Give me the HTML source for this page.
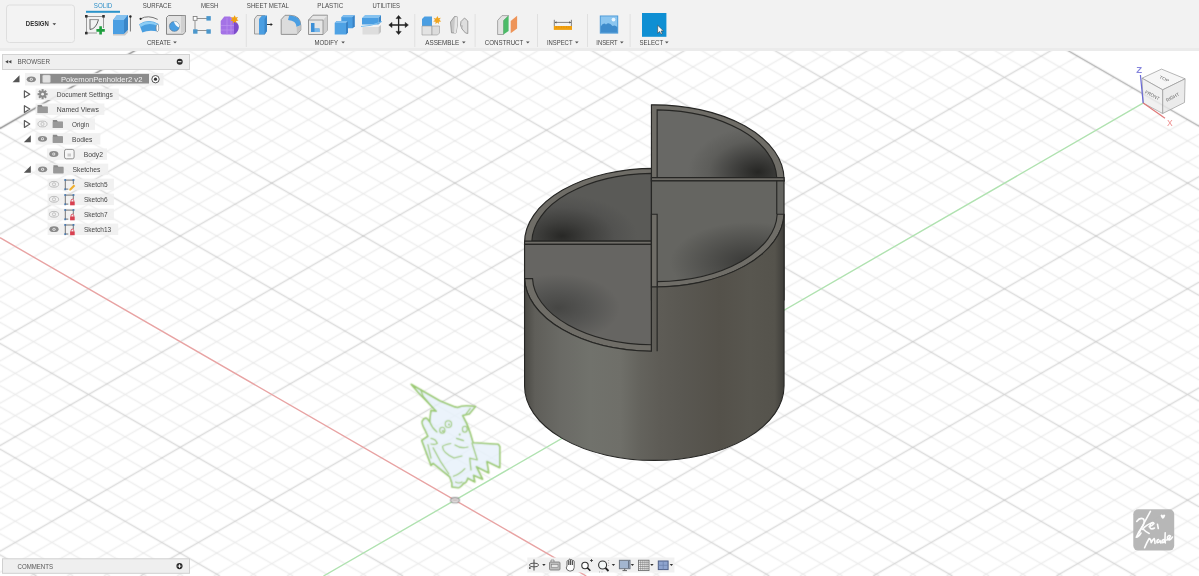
<!DOCTYPE html>
<html><head><meta charset="utf-8"><style>
html,body{margin:0;padding:0;width:1199px;height:576px;overflow:hidden;background:#fff;}
svg{display:block;}
#w{width:1199px;height:576px;}
</style></head><body><div id="w">
<svg width="1199" height="576" viewBox="0 0 1199 576">
<defs><filter id="bl" x="0" y="0" width="1199" height="576" filterUnits="userSpaceOnUse"><feConvolveMatrix order="3" kernelMatrix="1 2 1 2 8 2 1 2 1" divisor="20" edgeMode="duplicate" preserveAlpha="false"/></filter></defs>
<g filter="url(#bl)">
<rect width="1199" height="576" fill="#ffffff"/>
<path d="M0.0 576.0L0.1 576.0M0.0 533.7L73.3 576.0M0.0 512.5L110.0 576.0M0.0 491.4L146.6 576.0M0.0 470.3L183.2 576.0M0.0 428.0L256.5 576.0M0.0 406.8L293.2 576.0M0.0 385.7L329.8 576.0M0.0 364.6L366.4 576.0M0.0 322.3L439.7 576.0M0.0 301.1L476.4 576.0M0.0 280.0L513.0 576.0M0.0 258.9L549.6 576.0M0.0 216.6L622.9 576.0M0.0 195.4L659.5 576.0M0.0 174.3L696.2 576.0M0.0 153.2L732.8 576.0M15.2 119.7L806.1 576.0M33.6 109.1L842.7 576.0M51.9 98.5L879.4 576.0M70.2 88.0L916.0 576.0M106.8 66.8L989.3 576.0M125.2 56.3L1025.9 576.0M143.5 45.7L1062.6 576.0M161.8 35.1L1099.2 576.0M198.4 14.0L1172.5 576.0M216.8 3.4L1199.0 570.2M247.5 0.0L1199.0 549.0M284.1 0.0L1199.0 527.9M357.4 0.0L1199.0 485.6M394.0 0.0L1199.0 464.5M430.7 0.0L1199.0 443.3M467.3 0.0L1199.0 422.2M540.6 0.0L1199.0 379.9M577.2 0.0L1199.0 358.8M613.9 0.0L1199.0 337.6M650.5 0.0L1199.0 316.5M723.8 0.0L1199.0 274.2M760.4 0.0L1199.0 253.1M797.0 0.0L1199.0 231.9M833.7 0.0L1199.0 210.8M907.0 0.0L1199.0 168.5M943.6 0.0L1199.0 147.4M0.0 149.6L259.3 0.0M0.0 170.8L295.9 0.0M0.0 191.9L332.6 0.0M0.0 213.0L369.2 0.0M0.0 255.3L442.5 0.0M0.0 276.5L479.1 0.0M0.0 297.6L515.8 0.0M0.0 318.7L552.4 0.0M0.0 361.0L625.7 0.0M0.0 382.2L662.3 0.0M0.0 403.3L699.0 0.0M0.0 424.4L735.6 0.0M0.0 466.7L808.9 0.0M0.0 487.9L845.5 0.0M0.0 509.0L882.1 0.0M0.0 530.1L918.8 0.0M0.0 572.4L986.1 3.4M30.4 576.0L1004.5 14.0M67.1 576.0L1022.8 24.5M103.7 576.0L1041.1 35.1M177.0 576.0L1077.7 56.3M213.6 576.0L1096.1 66.8M250.3 576.0L1114.4 77.4M286.9 576.0L1132.7 88.0M360.2 576.0L1169.3 109.1M396.8 576.0L1187.7 119.7M433.4 576.0L1199.0 134.3M470.1 576.0L1199.0 155.4M543.4 576.0L1199.0 197.7M580.0 576.0L1199.0 218.8M616.6 576.0L1199.0 240.0M653.3 576.0L1199.0 261.1M726.5 576.0L1199.0 303.4M763.2 576.0L1199.0 324.5M799.8 576.0L1199.0 345.7M836.5 576.0L1199.0 366.8M909.7 576.0L1199.0 409.1M946.4 576.0L1199.0 430.2M983.0 576.0L1199.0 451.4M1019.6 576.0L1199.0 472.5M1092.9 576.0L1199.0 514.8M1129.6 576.0L1199.0 535.9M1166.2 576.0L1199.0 557.1" stroke="#e4e4e4" stroke-width="1" fill="none"/>
<path d="M0.0 554.8L36.7 576.0M0.0 449.1L219.9 576.0M0.0 343.4L403.1 576.0M0.0 132.0L769.5 576.0M88.5 77.4L952.6 576.0M180.1 24.5L1135.8 576.0M320.8 0.0L1199.0 506.8M503.9 0.0L1199.0 401.1M687.1 0.0L1199.0 295.4M870.3 0.0L1199.0 189.7M0.0 234.2L405.9 0.0M0.0 339.9L589.0 0.0M0.0 445.6L772.2 0.0M0.0 551.3L955.4 0.0M140.3 576.0L1059.4 45.7M506.7 576.0L1199.0 176.6M689.9 576.0L1199.0 282.2M873.1 576.0L1199.0 387.9M1056.3 576.0L1199.0 493.6" stroke="#c0c0c0" stroke-width="1" fill="none"/>
<path d="M0.0 128.5L222.7 0.0" stroke="#525252" stroke-width="1.15" fill="none"/><path d="M980.2 0.0L1199.0 126.2" stroke="#6e6e6e" stroke-width="1" fill="none"/>
</g>
<path d="M0.0 237.7L586.3 576.0" stroke="#e8a3a3" stroke-width="1.4" fill="none"/>
<path d="M323.5 576.0L1143.0 103.2" stroke="#b0e2b0" stroke-width="1.4" fill="none"/>
<g filter="url(#bl)"><path d="M411.1 384.3L439.7 400.8Q447 404 455 406.9L457.5 407.5Q463 404.5 475.5 406.5L469.3 414L462.6 415.5Q467.4 423.6 470.3 433.2L473.1 442.8L498.3 444.3L499.8 446.5L499.8 467.7L486.9 461.5L488.8 473L476.4 466.7L482.6 479.2L473.5 475.3L474.9 482L467.8 478.2Q466 484 463.9 483Q460 488 458.2 487.8L451.9 487L451.9 483.1L449.8 476.9L433.1 463.3L431 465.4L421.7 440.4L427.9 436.25L425 430Q421 423 422.4 420.8Q424 417.5 426.7 418.2L429.7 421.7L430.2 416.5L431 410.4L436.25 411.25L418 392.2Z" fill="#e6f0fa" fill-opacity="0.8" stroke="#98c86e" stroke-width="1.6" stroke-linejoin="round"/>
<path d="M420.6 389.5L423.2 396.5L433.6 408.6M470.3 408.4L466 414M429.7 421.7Q432 428 437 432M431 438.3Q436 439 437.3 443.5Q434 445 431 444M427.9 444.6L431 458.1M433.1 447.7Q440 462 448.75 473.75M450.8 443.5Q443 445 442.5 446.7Q443 453 454 458L462 456M456.5 438.4L463.6 440.6M455 445Q461 449 468 447M472 443L477.3 460L469.7 458.1L471 470M464.9 468.7Q460 474 453.4 476.3M455.5 482Q459 484 462 482" fill="none" stroke="#98c86e" stroke-width="1.2" stroke-linecap="round" stroke-linejoin="round"/>
<ellipse cx="442.3" cy="430.2" rx="2.6" ry="3" fill="none" stroke="#98c86e" stroke-width="1.1"/><ellipse cx="448.4" cy="424.1" rx="3.2" ry="3.4" fill="none" stroke="#98c86e" stroke-width="1.1"/><ellipse cx="464.8" cy="429.3" rx="2.4" ry="3" fill="none" stroke="#98c86e" stroke-width="1.1"/>
<circle cx="459.7" cy="434.5" r="0.9" fill="#98c86e"/><circle cx="442.8" cy="431" r="1" fill="#98c86e"/><circle cx="449" cy="424.5" r="1" fill="#98c86e"/>
<ellipse cx="455" cy="500.2" rx="4.3" ry="2.6" fill="#f4f0f0" stroke="#8a8a8a" stroke-width="1.1"/><path d="M452.5 500.2h5" stroke="#a09090" stroke-width="1"/></g>
<defs><linearGradient id="gOuter" x1="524.5" y1="0" x2="784" y2="0" gradientUnits="userSpaceOnUse">
<stop offset="0" stop-color="#4a4944"/><stop offset="0.04" stop-color="#5f5e59"/><stop offset="0.137" stop-color="#6a6a65"/>
<stop offset="0.252" stop-color="#71726c"/><stop offset="0.37" stop-color="#6f6f69"/><stop offset="0.445" stop-color="#64635d"/>
<stop offset="0.52" stop-color="#5e5c56"/><stop offset="0.6" stop-color="#5a5852"/><stop offset="0.753" stop-color="#54514a"/><stop offset="0.869" stop-color="#58564f"/>
<stop offset="0.965" stop-color="#55534c"/><stop offset="1" stop-color="#3f3e3a"/></linearGradient><radialGradient id="gBR" cx="758" cy="172" r="70" gradientUnits="userSpaceOnUse" gradientTransform="translate(758 172) scale(1 0.65) translate(-758 -172)">
<stop offset="0" stop-color="#262624"/><stop offset="0.3" stop-color="#3d3d3b"/><stop offset="0.7" stop-color="#5d5d5a"/><stop offset="1" stop-color="#686865"/></radialGradient><radialGradient id="gBL" cx="562" cy="236" r="75" gradientUnits="userSpaceOnUse" gradientTransform="translate(562 236) scale(1 0.55) translate(-562 -236)">
<stop offset="0" stop-color="#282826"/><stop offset="0.35" stop-color="#3f3f3d"/><stop offset="0.7" stop-color="#525250"/><stop offset="1" stop-color="#5a5a57"/></radialGradient><radialGradient id="gFL" cx="558" cy="308" r="62" gradientUnits="userSpaceOnUse" gradientTransform="translate(558 308) scale(1 0.55) translate(-558 -308)">
<stop offset="0" stop-color="#464644"/><stop offset="0.5" stop-color="#555553"/><stop offset="1" stop-color="#666562"/></radialGradient><radialGradient id="gFR" cx="750" cy="262" r="80" gradientUnits="userSpaceOnUse" gradientTransform="translate(750 262) scale(1 0.5) translate(-750 -262)">
<stop offset="0" stop-color="#393937"/><stop offset="0.5" stop-color="#4f4f4c"/><stop offset="1" stop-color="#656561"/></radialGradient></defs>
<path d="M524.55 244.35L524.55 242.70A129.75 74.40 0 0 1 654.30 168.30L654.30 244.35Z" fill="#6f6d67" stroke="#262624" stroke-width="1.15"/>
<path d="M531.88 241.05A122.45 69.40 0 0 1 651.45 173.32L651.45 241.05Z" fill="url(#gBL)" stroke="#262624" stroke-width="1.15"/>
<path d="M524.55 241.05L651.45 241.05L651.45 244.35L524.55 244.35Z" fill="#6f6d67" stroke="#262624" stroke-width="1.15"/>
<path d="M651.45 180.85L651.45 104.82A129.75 74.40 0 0 1 784.05 179.20L784.05 180.85Z" fill="#6f6d67" stroke="#262624" stroke-width="1.15"/>
<path d="M657.15 177.55L657.15 109.82A122.45 69.40 0 0 1 776.72 177.55Z" fill="url(#gBR)" stroke="#262624" stroke-width="1.15"/>
<path d="M651.45 177.55L784.05 177.55L784.05 180.85L651.45 180.85Z" fill="#6f6d67" stroke="#262624" stroke-width="1.15"/>
<path d="M524.55 244.35L651.45 244.35L651.45 360L524.55 360Z" fill="url(#gFL)" stroke="#262624" stroke-width="1.15"/>
<path d="M651.45 180.85L784.05 180.85L784.05 300L651.45 300Z" fill="url(#gFR)" stroke="#262624" stroke-width="1.15"/>
<path d="M776.75 180.85L776.75 214.25" stroke="#262624" stroke-width="1.15"/>
<path d="M784.05 214.25A129.75 74.40 0 0 1 657.15 286.98L657.15 281.58A122.85 69.00 0 0 0 777.15 214.25Z" fill="#6f6d67" stroke="#262624" stroke-width="1.15"/>
<path d="M651.45 214.25L657.15 214.25L657.15 286.98L651.45 286.98Z" fill="#6f6d67" stroke="#262624" stroke-width="1.15"/>
<path d="M651.45 351.28A129.75 74.40 0 0 1 524.55 278.55L532.55 278.55A121.75 67.90 0 0 0 651.45 344.78Z" fill="#6f6d67" stroke="#262624" stroke-width="1.15"/>
<path d="M524.55 278.55L524.55 386.00A129.75 74.40 0 0 0 784.05 386.00L784.05 214.25A129.75 74.40 0 0 1 651.45 286.98L651.45 351.28A129.75 74.40 0 0 1 524.55 278.55Z" fill="url(#gOuter)" stroke="#262624" stroke-width="1.1"/>
<path d="M657.15 286.98L657.15 351.28" stroke="#262624" stroke-width="1.15"/>
<g opacity="0.999"><rect x="0" y="0" width="1199" height="48.5" fill="#f2f2f2"/>
<rect x="0" y="48" width="1199" height="3" fill="#ebebeb"/>
<rect x="6.5" y="5" width="68" height="37.5" rx="3" fill="#f3f3f3" stroke="#dedede" stroke-width="1"/>
<text x="25.8" y="26.09" font-family="Liberation Sans, sans-serif" font-size="7.4" fill="#2e2e2e" font-weight="bold" text-anchor="start" textLength="23.0" lengthAdjust="spacingAndGlyphs" >DESIGN</text>
<path d="M52.5 23.2h3.6l-1.8 2.1z" fill="#3f3f3f"/>
<text x="93.8" y="7.82" font-family="Liberation Sans, sans-serif" font-size="7.3" fill="#2d8fc8" font-weight="normal" text-anchor="start" textLength="18.5" lengthAdjust="spacingAndGlyphs" >SOLID</text>
<text x="142.8" y="7.82" font-family="Liberation Sans, sans-serif" font-size="7.3" fill="#4a4a4a" font-weight="normal" text-anchor="start" textLength="28.7" lengthAdjust="spacingAndGlyphs" >SURFACE</text>
<text x="200.9" y="7.82" font-family="Liberation Sans, sans-serif" font-size="7.3" fill="#4a4a4a" font-weight="normal" text-anchor="start" textLength="17.4" lengthAdjust="spacingAndGlyphs" >MESH</text>
<text x="246.8" y="7.82" font-family="Liberation Sans, sans-serif" font-size="7.3" fill="#4a4a4a" font-weight="normal" text-anchor="start" textLength="42.1" lengthAdjust="spacingAndGlyphs" >SHEET METAL</text>
<text x="317.3" y="7.82" font-family="Liberation Sans, sans-serif" font-size="7.3" fill="#4a4a4a" font-weight="normal" text-anchor="start" textLength="25.9" lengthAdjust="spacingAndGlyphs" >PLASTIC</text>
<text x="372.6" y="7.82" font-family="Liberation Sans, sans-serif" font-size="7.3" fill="#4a4a4a" font-weight="normal" text-anchor="start" textLength="27.4" lengthAdjust="spacingAndGlyphs" >UTILITIES</text>
<rect x="86" y="10.8" width="34" height="2" fill="#2b93c9"/>
<rect x="245.8" y="14" width="1" height="33" fill="#e0e0e0"/>
<rect x="414.3" y="14" width="1" height="33" fill="#e0e0e0"/>
<rect x="474.6" y="14" width="1" height="33" fill="#e0e0e0"/>
<rect x="537.0" y="14" width="1" height="33" fill="#e0e0e0"/>
<rect x="587.0" y="14" width="1" height="33" fill="#e0e0e0"/>
<rect x="629.6" y="14" width="1" height="33" fill="#e0e0e0"/>
<text x="146.9" y="45.15" font-family="Liberation Sans, sans-serif" font-size="7.2" fill="#444444" font-weight="normal" text-anchor="start" textLength="24.0" lengthAdjust="spacingAndGlyphs" >CREATE</text>
<path d="M173.2 41.4h3.6l-1.8 2z" fill="#505050"/>
<text x="314.6" y="45.15" font-family="Liberation Sans, sans-serif" font-size="7.2" fill="#444444" font-weight="normal" text-anchor="start" textLength="23.4" lengthAdjust="spacingAndGlyphs" >MODIFY</text>
<path d="M341.3 41.4h3.6l-1.8 2z" fill="#505050"/>
<text x="425.2" y="45.15" font-family="Liberation Sans, sans-serif" font-size="7.2" fill="#444444" font-weight="normal" text-anchor="start" textLength="34.1" lengthAdjust="spacingAndGlyphs" >ASSEMBLE</text>
<path d="M462.0 41.4h3.6l-1.8 2z" fill="#505050"/>
<text x="484.8" y="45.15" font-family="Liberation Sans, sans-serif" font-size="7.2" fill="#444444" font-weight="normal" text-anchor="start" textLength="38.5" lengthAdjust="spacingAndGlyphs" >CONSTRUCT</text>
<path d="M526.0 41.4h3.6l-1.8 2z" fill="#505050"/>
<text x="546.9" y="45.15" font-family="Liberation Sans, sans-serif" font-size="7.2" fill="#444444" font-weight="normal" text-anchor="start" textLength="25.6" lengthAdjust="spacingAndGlyphs" >INSPECT</text>
<path d="M575.0 41.4h3.6l-1.8 2z" fill="#505050"/>
<text x="596.3" y="45.15" font-family="Liberation Sans, sans-serif" font-size="7.2" fill="#444444" font-weight="normal" text-anchor="start" textLength="21.3" lengthAdjust="spacingAndGlyphs" >INSERT</text>
<path d="M620.0 41.4h3.6l-1.8 2z" fill="#505050"/>
<text x="639.5" y="45.15" font-family="Liberation Sans, sans-serif" font-size="7.2" fill="#444444" font-weight="normal" text-anchor="start" textLength="23.7" lengthAdjust="spacingAndGlyphs" >SELECT</text>
<path d="M665.0 41.4h3.6l-1.8 2z" fill="#505050"/>
<g>
<path d="M86.5 16.5H103.5V28M86.5 16.5V33H97" stroke="#9a9a9a" stroke-width="1" fill="none"/>
<rect x="85" y="15" width="2.6" height="2.6" fill="#333"/><rect x="102.2" y="15" width="2.6" height="2.6" fill="#333"/><rect x="85" y="31.8" width="2.6" height="2.6" fill="#333"/>
<path d="M90 19.6V29.5Q96 29 98.5 19.6" stroke="#555" stroke-width="0.9" fill="none"/>
<path d="M89.5 19.6H98.5" stroke="#777" stroke-width="0.8"/>
<path d="M100.6 26.2v8.4M96.4 30.4h8.4" stroke="#1e9e3e" stroke-width="2.6"/>
</g>
<g>
<path d="M113 20L117 15H128V30L124 34H113Z" fill="#4a9ee2"/>
<path d="M113 20L117 15H128L124 20Z" fill="#86c2ef"/>
<path d="M124 20L128 15V30L124 34Z" fill="#3a86c8"/>
<path d="M113 34H124L128 30V32.5L125 35.5H113Z" fill="#c8c8c8"/>
<path d="M130.4 16V31.5" stroke="#777" stroke-width="1"/><circle cx="130.4" cy="16.5" r="1.2" fill="#222"/>
</g>
<g>
<path d="M140.6 18.8Q148 14.5 157.7 19.4" stroke="#555" stroke-width="0.8" fill="none"/><circle cx="140.6" cy="18.8" r="1.1" fill="#222"/>
<path d="M139.2 24.2Q148.6 17.8 158.6 24L158 31.5Q148.6 29.5 142.3 32.5Z" fill="#4a9fe0"/>
<path d="M139.6 24.3Q148.6 19 158.3 24.2L157.8 26Q148.6 21.5 140.5 27Z" fill="#8ccdf5"/>
<ellipse cx="157.4" cy="28" rx="1.3" ry="3.6" fill="#fff" stroke="#777" stroke-width="0.6"/>
</g>
<g>
<path d="M168.5 15.5H185.5V32L183 34.3H166.5V17.5Z" fill="#e2e2e2" stroke="#7a7a7a" stroke-width="0.9"/>
<path d="M181 16L185.2 15.8V32L181 33Z" fill="#d0d0d0"/>
<circle cx="174.4" cy="26.4" r="5" fill="#4a9ee2" stroke="#4a5a6a" stroke-width="0.7" stroke-dasharray="0.8 0.5"/>
<path d="M173.8 21.5A5 5 0 0 1 179.3 27.4Q175.5 26.5 173.8 21.5Z" fill="#f4f8fb"/>
</g>
<g>
<path d="M197 18.5H207M195 21V30.5H207" stroke="#888" stroke-width="0.9" fill="none"/>
<rect x="193.2" y="16.5" width="3.8" height="3.8" fill="#fff" stroke="#777" stroke-width="0.8"/>
<rect x="206.4" y="16.1" width="4.4" height="4.5" fill="#4b97cc"/><rect x="193.1" y="29.3" width="4.4" height="4.4" fill="#4b97cc"/><rect x="206.4" y="29.3" width="4.4" height="4.4" fill="#4b97cc"/>
</g>
<g>
<path d="M220.7 21L224.3 16.5H230L234 20V34.6H222.5Q220.7 34.6 220.7 32.8Z" fill="#a472e6"/>
<path d="M234 21Q238.8 23 238.8 27Q238.8 32 234 34.6Z" fill="#7d4bcb"/>
<path d="M221 25.5H234M221 30H234M227 18V34.5M231 18V34.5" stroke="#bf98f0" stroke-width="0.6"/>
<path d="M234.8 15.2l.9 2.3 2.4-.5-1.4 2 1.8 1.6-2.4.3.2 2.4-1.8-1.6-1.7 1.7.1-2.4-2.4-.3 1.8-1.6-1.4-2 2.4.5z" fill="#f0a010"/>
</g>
<g>
<path d="M254.5 19L257 15.5H265V34H254.5Z" fill="#e3e3e3" stroke="#8a8a8a" stroke-width="0.8"/>
<path d="M259 19L262 15.5H267V31L264.5 34.5H259Z" fill="#4a9ee2"/>
<path d="M264.5 19L267 15.5V31L264.5 34.5Z" fill="#3a86c8"/>
<path d="M267 24.5H272" stroke="#222" stroke-width="0.9"/><path d="M272.8 24.5l-2.2-1.6v3.2z" fill="#222"/>
</g>
<g>
<path d="M281.2 19.5L285 15.3H290Q300.8 15.5 300.8 25.5V30L297 34.4H281.2Z" fill="#dcdcdc" stroke="#8a8a8a" stroke-width="0.9"/>
<path d="M289.2 15.6Q300.5 15.8 300.6 25.3L296.6 27Q296.3 20.5 288 20Z" fill="#4a9ee2"/>
<path d="M296.6 27L300.6 25.3V30L297 34Z" fill="#c4c4c4"/>
</g>
<g>
<path d="M308.5 20L313 15.2H327.5V30L323 34.5H308.5Z" fill="#e6e6e6" stroke="#8a8a8a" stroke-width="0.9"/>
<path d="M323 20L327.5 15.2V30L323 34.5Z" fill="#cfcfcf"/><path d="M308.5 20H323V34.5" stroke="#8a8a8a" stroke-width="0.8" fill="none"/>
<path d="M311 23H314.5V28.5H319.5V32H311Z" fill="#3d8fd6"/><path d="M314.5 28.5H319.5V32H314.5Z" fill="#7ab8ea"/>
</g>
<g>
<path d="M341.3 17.2L343.3 15.2H354.6V26.3L352.6 28.3H341.3Z" fill="#4a9ee2"/>
<path d="M341.3 17.2L343.3 15.2H354.6L352.6 17.2Z" fill="#7fbdee"/><path d="M352.6 17.2L354.6 15.2V26.3L352.6 28.3Z" fill="#3a82c4"/>
<path d="M334.7 23L336.7 21H348V32.6L346 34.6H334.7Z" fill="#4fa2e4"/>
<path d="M334.7 23L336.7 21H348L346 23Z" fill="#7fbdee"/><path d="M346 23L348 21V32.6L346 34.6Z" fill="#3a82c4"/>
</g>
<g>
<path d="M362 18L365 15H381L378.5 18Z" fill="#86c2ef"/><path d="M362 18H378.5V24.5H362Z" fill="#4a9ee2"/><path d="M378.5 18L381 15V22L378.5 24.5Z" fill="#3a86c8"/>
<path d="M361 26.5Q371 26.5 382 21.5" stroke="#7cc0f0" stroke-width="1" fill="none"/>
<path d="M362.5 27H378.5V34.5H362.5Z" fill="#dddddd"/><path d="M378.5 27L381 25V32L378.5 34.5Z" fill="#c4c4c4"/>
</g>
<g stroke="#222" stroke-width="1.3" fill="#222">
<path d="M398.6 17.5V32.5M390.5 25H406.7" fill="none"/>
<path d="M398.6 15.4l-2.6 3.2h5.2z M398.6 34.6l-2.6-3.2h5.2z M388.8 25l3.2-2.6v5.2z M408.4 25l-3.2-2.6v5.2z" stroke-width="0.5"/>
</g>
<g>
<path d="M422 19L424.5 16.5H432V26H422Z" fill="#4a9ee2"/><path d="M422 26H432V35H422Z" fill="#e3e3e3" stroke="#999" stroke-width="0.6"/>
<path d="M432 26H439.5V33L437.5 35H432Z" fill="#dcdcdc" stroke="#999" stroke-width="0.6"/>
<path d="M437.5 16l.9 2.3 2.4-.5-1.4 2 1.8 1.6-2.4.3.2 2.4-1.8-1.6-1.7 1.7.1-2.4-2.4-.3 1.8-1.6-1.4-2 2.4.5z" fill="#f0a520"/>
</g>
<g stroke="#8a8a8a" stroke-width="0.8">
<path d="M450.5 22L454.5 16.5L457.5 17V24L456 33L451.5 32.8Z" fill="#c8c8c8"/><path d="M455 17.2L457.5 17V24L456 33L454 33Z" fill="#e6e6e6" stroke="none"/>
<path d="M460.5 25L461 21.5L464.5 18L467.8 21V33.5L465.5 33L462 29Z" fill="#dedede"/><path d="M460.5 25L462 29L463 25.5Z" fill="#b8b8b8" stroke="none"/>
</g>
<g>
<path d="M497.6 20.5L502 15.6H508.6L503.6 20.5V34.5H497.6Z" fill="#e3e3e3" stroke="#8a8a8a" stroke-width="0.7"/>
<path d="M503.4 20.5L508.6 15.4V31L503.4 34.5Z" fill="#4cbb68"/>
<path d="M510.7 21L517.1 15.8V28.5L510.7 33.3Z" fill="#ee9458"/>
</g>
<g>
<path d="M554.3 19.8V26M571.4 19.8V26" stroke="#666" stroke-width="0.8"/>
<path d="M555 22.4H570.7" stroke="#666" stroke-width="0.8"/><path d="M554.5 22.4l2 -1.2v2.4z M571.2 22.4l-2-1.2v2.4z" fill="#555"/>
<rect x="553.8" y="26" width="18.2" height="3.9" fill="#f0a010"/>
<path d="M556 27h.8M558.5 27h.8M561 27h.8M563.5 27h.8M566 27h.8M568.5 27h.8" stroke="#d08000" stroke-width="0.8"/>
</g>
<g>
<rect x="599.8" y="15.5" width="18.4" height="18.1" fill="#4a98d6"/>
<rect x="600.7" y="16.4" width="16.6" height="16.3" fill="#8cc6f0"/>
<path d="M600.7 32.7V26.5Q603.5 22 606 24.5Q609 21.5 612.5 26Q615 24.5 617.3 27V32.7Z" fill="#3f8ccc"/>
<circle cx="613.5" cy="19.6" r="1.9" fill="#e8f5ff"/>
</g>
<g>
<rect x="642" y="13" width="24.4" height="23.8" fill="#0f8fd3"/>
<path d="M657.7 25.3V33.3L659.6 31.4L661 34.2L662.3 33.6L661 30.9H663.5Z" fill="#fff" stroke="#333" stroke-width="0.5"/>
</g>
<rect x="2.5" y="54.5" width="187" height="15" fill="#efefef" stroke="#d3d3d3" stroke-width="1"/>
<path d="M5.2 61.7l3-1.8v3.6z M8.4 61.7l3-1.8v3.6z" fill="#444"/>
<text x="17.5" y="64.32" font-family="Liberation Sans, sans-serif" font-size="7.3" fill="#555555" font-weight="normal" text-anchor="start" textLength="32.5" lengthAdjust="spacingAndGlyphs" >BROWSER</text>
<circle cx="179.7" cy="61.7" r="3" fill="#2c2c2c"/><rect x="178" y="61.2" width="3.4" height="1" fill="#fff"/>
<path d="M19.5 75.3V82.3H12.5Z" fill="#555"/>
<rect x="25" y="73" width="138.5" height="12.5" fill="#efefef" fill-opacity="0.88"/>
<g><ellipse cx="31.3" cy="79.3" rx="4.6" ry="2.9" fill="#8a8a8a"/><circle cx="31.3" cy="79.3" r="1.5" fill="#f0f0f0"/><circle cx="31.3" cy="79.3" r="0.8" fill="#8a8a8a"/></g>
<rect x="40" y="73.9" width="109" height="9.6" fill="#8c8c8c"/>
<rect x="42.6" y="75" width="7.8" height="7.8" rx="1.2" fill="#e2e2e2" stroke="#bbb" stroke-width="0.5"/>
<text x="60.9" y="81.89" font-family="Liberation Sans, sans-serif" font-size="7.8" fill="#f2f2f2" font-weight="normal" text-anchor="start" textLength="81.5" lengthAdjust="spacingAndGlyphs" >PokemonPenholder2 v2</text>
<circle cx="155.5" cy="79.2" r="3.7" fill="#fff" stroke="#444" stroke-width="0.9"/><circle cx="155.5" cy="79.2" r="1.6" fill="#333"/>
<rect x="35.6" y="88.60000000000001" width="83.19999999999999" height="11.399999999999991" fill="#efefef" fill-opacity="0.88"/>
<path d="M24.400000000000002 90.8L29.8 94.2L24.400000000000002 97.60000000000001Z" fill="none" stroke="#5e5e5e" stroke-width="1.2" stroke-linejoin="round"/>
<g transform="translate(42.6 94.2)"><circle r="3.3" fill="#8a8a8a"/><rect x="-1.05" y="-5" width="2.1" height="2.4" fill="#8a8a8a" transform="rotate(0)"/><rect x="-1.05" y="-5" width="2.1" height="2.4" fill="#8a8a8a" transform="rotate(45)"/><rect x="-1.05" y="-5" width="2.1" height="2.4" fill="#8a8a8a" transform="rotate(90)"/><rect x="-1.05" y="-5" width="2.1" height="2.4" fill="#8a8a8a" transform="rotate(135)"/><rect x="-1.05" y="-5" width="2.1" height="2.4" fill="#8a8a8a" transform="rotate(180)"/><rect x="-1.05" y="-5" width="2.1" height="2.4" fill="#8a8a8a" transform="rotate(225)"/><rect x="-1.05" y="-5" width="2.1" height="2.4" fill="#8a8a8a" transform="rotate(270)"/><rect x="-1.05" y="-5" width="2.1" height="2.4" fill="#8a8a8a" transform="rotate(315)"/><circle r="1.4" fill="#f0f0f0"/></g>
<text x="56.7" y="97.06" font-family="Liberation Sans, sans-serif" font-size="7.9" fill="#464646" font-weight="normal" text-anchor="start" textLength="56.1" lengthAdjust="spacingAndGlyphs" >Document Settings</text>
<rect x="35.6" y="103.5" width="68.69999999999999" height="11.399999999999991" fill="#efefef" fill-opacity="0.88"/>
<path d="M24.400000000000002 105.69999999999999L29.8 109.1L24.400000000000002 112.5Z" fill="none" stroke="#5e5e5e" stroke-width="1.2" stroke-linejoin="round"/>
<path d="M37.6 105.1h4l1 1.5h5v6.5h-10z" fill="#8a8a8a"/><rect x="37.6" y="107.1" width="10" height="6" fill="#999"/>
<text x="56.7" y="111.96" font-family="Liberation Sans, sans-serif" font-size="7.9" fill="#464646" font-weight="normal" text-anchor="start" textLength="42.3" lengthAdjust="spacingAndGlyphs" >Named Views</text>
<rect x="35.6" y="118.4" width="59.4" height="11.400000000000006" fill="#efefef" fill-opacity="0.88"/>
<path d="M24.400000000000002 120.6L29.8 124.0L24.400000000000002 127.4Z" fill="none" stroke="#5e5e5e" stroke-width="1.2" stroke-linejoin="round"/>
<g><ellipse cx="42.5" cy="124.0" rx="4.6" ry="2.9" fill="none" stroke="#b9b9b9" stroke-width="0.9"/><circle cx="42.5" cy="124.0" r="1.6" fill="none" stroke="#b9b9b9" stroke-width="0.8"/></g>
<path d="M52.8 120.0h4l1 1.5h5v6.5h-10z" fill="#8a8a8a"/><rect x="52.8" y="122.0" width="10" height="6" fill="#999"/>
<text x="72.0" y="126.86" font-family="Liberation Sans, sans-serif" font-size="7.9" fill="#464646" font-weight="normal" text-anchor="start" textLength="17.0" lengthAdjust="spacingAndGlyphs" >Origin</text>
<rect x="35.6" y="133.20000000000002" width="64.69999999999999" height="11.400000000000006" fill="#efefef" fill-opacity="0.88"/>
<path d="M30.8 135.3V142.3H23.8Z" fill="#555"/>
<g><ellipse cx="42.5" cy="138.8" rx="4.6" ry="2.9" fill="#8a8a8a"/><circle cx="42.5" cy="138.8" r="1.5" fill="#f0f0f0"/><circle cx="42.5" cy="138.8" r="0.8" fill="#8a8a8a"/></g>
<path d="M52.8 134.8h4l1 1.5h5v6.5h-10z" fill="#8a8a8a"/><rect x="52.8" y="136.8" width="10" height="6" fill="#999"/>
<text x="72.0" y="141.66" font-family="Liberation Sans, sans-serif" font-size="7.9" fill="#464646" font-weight="normal" text-anchor="start" textLength="20.4" lengthAdjust="spacingAndGlyphs" >Bodies</text>
<rect x="46.9" y="148.4" width="60.1" height="11.400000000000006" fill="#efefef" fill-opacity="0.88"/>
<g><ellipse cx="53.8" cy="154.0" rx="4.6" ry="2.9" fill="#8a8a8a"/><circle cx="53.8" cy="154.0" r="1.5" fill="#f0f0f0"/><circle cx="53.8" cy="154.0" r="0.8" fill="#8a8a8a"/></g>
<rect x="64.5" y="149.4" width="9.6" height="9.4" rx="1.8" fill="#f6f6f6" stroke="#888" stroke-width="0.9"/><rect x="67.5" y="153.5" width="3.5" height="3" fill="#ccc"/>
<text x="83.8" y="156.86" font-family="Liberation Sans, sans-serif" font-size="7.9" fill="#464646" font-weight="normal" text-anchor="start" textLength="19.2" lengthAdjust="spacingAndGlyphs" >Body2</text>
<rect x="35.6" y="163.70000000000002" width="72.6" height="11.400000000000006" fill="#efefef" fill-opacity="0.88"/>
<path d="M30.8 165.8V172.8H23.8Z" fill="#555"/>
<g><ellipse cx="42.6" cy="169.3" rx="4.6" ry="2.9" fill="#8a8a8a"/><circle cx="42.6" cy="169.3" r="1.5" fill="#f0f0f0"/><circle cx="42.6" cy="169.3" r="0.8" fill="#8a8a8a"/></g>
<path d="M53.4 165.3h4l1 1.5h5v6.5h-10z" fill="#8a8a8a"/><rect x="53.4" y="167.3" width="10" height="6" fill="#999"/>
<text x="72.6" y="172.16" font-family="Liberation Sans, sans-serif" font-size="7.9" fill="#464646" font-weight="normal" text-anchor="start" textLength="27.8" lengthAdjust="spacingAndGlyphs" >Sketches</text>
<rect x="47.7" y="178.70000000000002" width="66.2" height="11.400000000000006" fill="#efefef" fill-opacity="0.88"/>
<g><ellipse cx="54.0" cy="184.3" rx="4.6" ry="2.9" fill="none" stroke="#b9b9b9" stroke-width="0.9"/><circle cx="54.0" cy="184.3" r="1.6" fill="none" stroke="#b9b9b9" stroke-width="0.8"/></g>
<path d="M65.3 180.10000000000002V189.10000000000002H68.3M65.3 180.10000000000002H73.3V184.10000000000002" stroke="#555" stroke-width="0.8" fill="none" stroke-dasharray="none"/><rect x="64.3" y="179.10000000000002" width="1.8" height="1.8" fill="#4a7ab0"/><rect x="72.6" y="179.10000000000002" width="1.8" height="1.8" fill="#4a7ab0"/><rect x="64.3" y="188.40000000000003" width="1.8" height="1.8" fill="#4a7ab0"/><path d="M69.3 189.10000000000002l4.5-4.5 1.5 1.5-4.5 4.5h-1.5z" fill="#f0b030"/>
<text x="84.0" y="187.16" font-family="Liberation Sans, sans-serif" font-size="7.9" fill="#464646" font-weight="normal" text-anchor="start" textLength="23.5" lengthAdjust="spacingAndGlyphs" >Sketch5</text>
<rect x="47.7" y="193.70000000000002" width="66.2" height="11.400000000000006" fill="#efefef" fill-opacity="0.88"/>
<g><ellipse cx="54.0" cy="199.3" rx="4.6" ry="2.9" fill="none" stroke="#b9b9b9" stroke-width="0.9"/><circle cx="54.0" cy="199.3" r="1.6" fill="none" stroke="#b9b9b9" stroke-width="0.8"/></g>
<path d="M65.3 195.10000000000002V204.10000000000002H68.3M65.3 195.10000000000002H73.3V199.10000000000002" stroke="#555" stroke-width="0.8" fill="none" stroke-dasharray="none"/><rect x="64.3" y="194.10000000000002" width="1.8" height="1.8" fill="#4a7ab0"/><rect x="72.6" y="194.10000000000002" width="1.8" height="1.8" fill="#4a7ab0"/><rect x="64.3" y="203.40000000000003" width="1.8" height="1.8" fill="#4a7ab0"/><rect x="70.1" y="201.50000000000003" width="4.6" height="3.8" fill="#d84050"/><path d="M71.1 201.70000000000002v-1.2a1.3 1.3 0 0 1 2.6 0v1.2" stroke="#d84050" stroke-width="0.9" fill="none"/>
<text x="84.0" y="202.16" font-family="Liberation Sans, sans-serif" font-size="7.9" fill="#464646" font-weight="normal" text-anchor="start" textLength="23.5" lengthAdjust="spacingAndGlyphs" >Sketch6</text>
<rect x="47.7" y="208.70000000000002" width="66.2" height="11.400000000000006" fill="#efefef" fill-opacity="0.88"/>
<g><ellipse cx="54.0" cy="214.3" rx="4.6" ry="2.9" fill="none" stroke="#b9b9b9" stroke-width="0.9"/><circle cx="54.0" cy="214.3" r="1.6" fill="none" stroke="#b9b9b9" stroke-width="0.8"/></g>
<path d="M65.3 210.10000000000002V219.10000000000002H68.3M65.3 210.10000000000002H73.3V214.10000000000002" stroke="#555" stroke-width="0.8" fill="none" stroke-dasharray="none"/><rect x="64.3" y="209.10000000000002" width="1.8" height="1.8" fill="#4a7ab0"/><rect x="72.6" y="209.10000000000002" width="1.8" height="1.8" fill="#4a7ab0"/><rect x="64.3" y="218.40000000000003" width="1.8" height="1.8" fill="#4a7ab0"/><rect x="70.1" y="216.50000000000003" width="4.6" height="3.8" fill="#d84050"/><path d="M71.1 216.70000000000002v-1.2a1.3 1.3 0 0 1 2.6 0v1.2" stroke="#d84050" stroke-width="0.9" fill="none"/>
<text x="84.0" y="217.16" font-family="Liberation Sans, sans-serif" font-size="7.9" fill="#464646" font-weight="normal" text-anchor="start" textLength="23.5" lengthAdjust="spacingAndGlyphs" >Sketch7</text>
<rect x="47.7" y="223.6" width="70.5" height="11.400000000000006" fill="#efefef" fill-opacity="0.88"/>
<g><ellipse cx="54.0" cy="229.2" rx="4.6" ry="2.9" fill="#8a8a8a"/><circle cx="54.0" cy="229.2" r="1.5" fill="#f0f0f0"/><circle cx="54.0" cy="229.2" r="0.8" fill="#8a8a8a"/></g>
<path d="M65.3 225.0V234.0H68.3M65.3 225.0H73.3V229.0" stroke="#555" stroke-width="0.8" fill="none" stroke-dasharray="none"/><rect x="64.3" y="224.0" width="1.8" height="1.8" fill="#4a7ab0"/><rect x="72.6" y="224.0" width="1.8" height="1.8" fill="#4a7ab0"/><rect x="64.3" y="233.3" width="1.8" height="1.8" fill="#4a7ab0"/><rect x="70.1" y="231.4" width="4.6" height="3.8" fill="#d84050"/><path d="M71.1 231.6v-1.2a1.3 1.3 0 0 1 2.6 0v1.2" stroke="#d84050" stroke-width="0.9" fill="none"/>
<text x="84.0" y="232.06" font-family="Liberation Sans, sans-serif" font-size="7.9" fill="#464646" font-weight="normal" text-anchor="start" textLength="27.2" lengthAdjust="spacingAndGlyphs" >Sketch13</text>
<rect x="2.5" y="558.8" width="187" height="14.5" fill="#efefef" stroke="#d0d0d0" stroke-width="1"/>
<text x="17.5" y="568.65" font-family="Liberation Sans, sans-serif" font-size="7.2" fill="#555555" font-weight="normal" text-anchor="start" textLength="35.5" lengthAdjust="spacingAndGlyphs" >COMMENTS</text>
<circle cx="179.5" cy="566.1" r="3.1" fill="#2c2c2c"/><path d="M177.7 566.1h3.6M179.5 564.3v3.6" stroke="#fff" stroke-width="0.9"/>
<rect x="527.3" y="557.5" width="147.1" height="15" fill="#f1f1f1"/>
<g>
<ellipse cx="534" cy="565" rx="4.6" ry="1.9" fill="none" stroke="#444" stroke-width="0.9"/><path d="M534 559.5V570.5" stroke="#444" stroke-width="1"/><path d="M529.5 566.5l-.5 2.5 2.2-.8z" fill="#333"/>
<path d="M542.2 564h3.4l-1.7 2.1z" fill="#333"/>
<rect x="549.5" y="562" width="10.5" height="8" rx="1" fill="#bdbdbd" stroke="#777" stroke-width="0.8"/><rect x="551.5" y="564.5" width="6.5" height="3" fill="#e5e5e5" stroke="#777" stroke-width="0.5"/><path d="M551 562v-2h3v2" stroke="#777" stroke-width="0.7" fill="none"/>
<path d="M567 566v-4.5a.9 .9 0 0 1 1.8 0v3.5v-5a.9 .9 0 0 1 1.8 0v5v-4.5a.9 .9 0 0 1 1.8 0v4.5v-3.5a.9 .9 0 0 1 1.8 0v6q0 3.5-3.5 3.5h-1q-2.5 0-3.5-3z" fill="#fff" stroke="#444" stroke-width="0.8"/>
<circle cx="585" cy="565.5" r="3.2" fill="#fff" stroke="#333" stroke-width="1.1"/><path d="M587.3 567.8l3 3" stroke="#222" stroke-width="1.6"/><path d="M590 560.5h3M591.5 559v3" stroke="#333" stroke-width="0.8"/>
<circle cx="602.6" cy="565" r="4" fill="#f4f8f8" stroke="#333" stroke-width="1.1"/><path d="M605.5 568l3 3" stroke="#222" stroke-width="1.8"/><path d="M608.6 560v1M608.6 562.5v1M608.6 565v1M599 572h1M601.5 572h1" stroke="#888" stroke-width="0.6"/>
<path d="M611.7 564h3.4l-1.7 2.1z" fill="#333"/>
<rect x="619.4" y="560.3" width="10.6" height="8.4" fill="#a3b6d0" stroke="#6d7580" stroke-width="1"/><path d="M622.5 570.6h4.5M624.7 568.7v1.9" stroke="#666" stroke-width="1"/><path d="M628.5 561v7" stroke="#5a6575" stroke-width="0.8"/>
<path d="M630.7 564h3.4l-1.7 2.1z" fill="#333"/>
<rect x="638.6" y="560.2" width="10.4" height="10.4" fill="#f3f3f3" stroke="#666" stroke-width="0.8"/><path d="M640.7 560.2v10.4M642.8 560.2v10.4M644.9 560.2v10.4M647 560.2v10.4M638.6 562.3h10.4M638.6 564.4h10.4M638.6 566.5h10.4M638.6 568.6h10.4" stroke="#777" stroke-width="0.6"/>
<path d="M650.2 564h3.4l-1.7 2.1z" fill="#333"/>
<rect x="658.3" y="561" width="9.8" height="8.6" fill="#8ea4cf" stroke="#4f5f85" stroke-width="1"/><path d="M663.2 561v8.6M658.3 565.3h9.8" stroke="#6a7fab" stroke-width="0.7"/>
<path d="M669.7 564h3.4l-1.7 2.1z" fill="#333"/>
</g>
<g>
<path d="M1142 78.2L1161.5 69.1L1185.1 78.8L1162.7 89.8Z" fill="#f4f4f4" fill-opacity="0.8" stroke="#9a9a9a" stroke-width="0.7"/>
<path d="M1142 78.2L1162.7 89.8L1162.7 113.5L1143.2 103.1Z" fill="#eeeeee" fill-opacity="0.8" stroke="#9a9a9a" stroke-width="0.7"/>
<path d="M1185.1 78.8L1162.7 89.8L1162.7 113.5L1184.5 102.5Z" fill="#e6e6e6" fill-opacity="0.8" stroke="#9a9a9a" stroke-width="0.7"/>
<text x="0" y="0" font-family="Liberation Sans, sans-serif" font-size="5" fill="#666" transform="translate(1159 78) rotate(25) scale(1 0.8)">TOP</text>
<text x="0" y="0" font-family="Liberation Sans, sans-serif" font-size="4.6" fill="#666" transform="translate(1144.5 93) rotate(28)">FRONT</text>
<text x="0" y="0" font-family="Liberation Sans, sans-serif" font-size="4.6" fill="#666" transform="translate(1167 102) rotate(-28)">RIGHT</text>
<path d="M1143.2 103.1L1140.4 75" stroke="#6a6ad6" stroke-width="1.2"/>
<path d="M1143.2 103.1L1165 118.3" stroke="#e07878" stroke-width="1.2"/>
<text x="1136.3" y="73" font-family="Liberation Sans, sans-serif" font-size="9.5" font-weight="bold" fill="#8585dd">Z</text>
<text x="1167" y="125.8" font-family="Liberation Sans, sans-serif" font-size="8.5" fill="#ee8f8f">X</text>
</g>
<g>
<rect x="1133.3" y="509.3" width="40.9" height="41.3" rx="5" fill="#b3b3b3" fill-opacity="0.95"/>
<g stroke="#fdfdfd" stroke-width="1.6" fill="none" stroke-linecap="round" stroke-linejoin="round">
<path d="M1150.4 511.4Q1145 521 1139.2 532.7"/>
<path d="M1136.7 521.4Q1140 517 1143.5 519Q1145.5 522 1142 527Q1138.5 532 1136.3 537.2Q1138.5 537 1141 533"/>
<path d="M1142.5 529.3Q1147 524 1152.5 522.7M1143 529Q1146 532 1149.2 533.5"/>
<path d="M1149.2 526.8Q1152 526 1154 523.5Q1153 521.5 1150.5 524Q1149 527.5 1151 528.8Q1153 529 1154.5 528"/>
<path d="M1157.5 524.3L1158.3 528.5"/>
<path d="M1144.6 547.7Q1147 542 1149.2 538.5Q1151 539 1151.2 542.7Q1153 539 1154.2 538.5Q1155 541 1155 543.5"/>
<path d="M1158.5 539.5Q1156.5 540 1157 542.5Q1159 543 1160 540.5L1160.8 543"/>
<path d="M1164 539.5Q1161.5 540 1162 542.5Q1164 543 1165 540M1165.2 532.7Q1164.8 538 1165.3 543"/>
<path d="M1166.7 540Q1170 538.5 1170.5 536Q1169 534.5 1167.5 537Q1167 540 1169.5 540Q1171.5 539 1172.5 537"/>
</g>
<path d="M1160.5 515.5q1.2-2 2.4 0q1.2-2 2.4 0q-.6 2.2-2.4 3.6q-1.8-1.4-2.4-3.6z" fill="#fdfdfd"/>
</g></g>
</svg></div>
</body></html>
